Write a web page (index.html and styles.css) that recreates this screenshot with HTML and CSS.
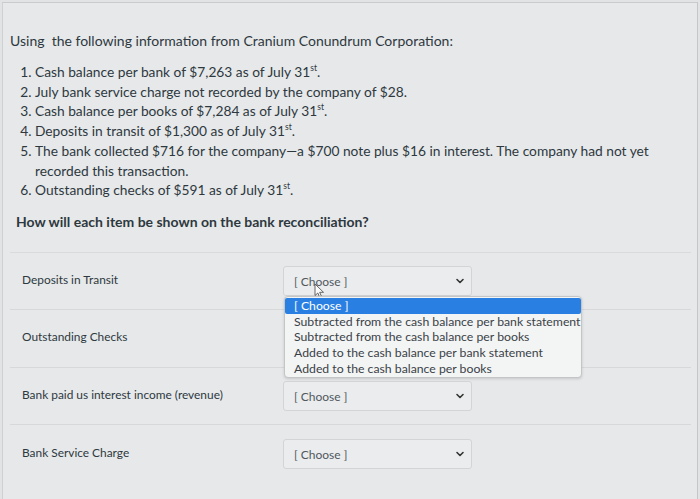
FILE: index.html
```html
<!DOCTYPE html>
<html>
<head>
<meta charset="utf-8">
<link rel="stylesheet" href="styles.css">
</head>
<body>
<div class="frame">
  <p class="intro">Using&nbsp; the following information from Cranium Conundrum Corporation:</p>
  <ol class="facts">
    <li>Cash balance per bank of $7,263 as of July 31<sup>st</sup>.</li>
    <li>July bank service charge not recorded by the company of $28.</li>
    <li>Cash balance per books of $7,284 as of July 31<sup>st</sup>.</li>
    <li>Deposits in transit of $1,300 as of July 31<sup>st</sup>.</li>
    <li>The bank collected $716 for the company—a $700 note plus $16 in interest. The company had not yet recorded this transaction.</li>
    <li>Outstanding checks of $591 as of July 31<sup>st</sup>.</li>
  </ol>
  <p class="question">How will each item be shown on the bank reconciliation?</p>
  <div class="matches">
    <div class="row">
      <div class="label">Deposits in Transit</div>
      <div class="sel-wrap">
        <div class="select"><span>[ Choose ]</span><svg class="chev" width="10" height="8" viewBox="0 0 10 8"><path d="M2 2.5 L5 5.5 L8 2.5" fill="none" stroke="#333" stroke-width="1.6" stroke-linecap="round" stroke-linejoin="round"/></svg></div>
        <svg class="cursor" width="12" height="16" viewBox="0 0 12 16"><path d="M1 1 L1 12.5 L3.8 10 L5.8 14.5 L7.6 13.7 L5.7 9.3 L9.5 9.3 Z" fill="#fafafa" stroke="#555" stroke-width="0.9" stroke-linejoin="round"/></svg>
        <ul class="dropdown">
          <li class="active">[ Choose ]</li>
          <li>Subtracted from the cash balance per bank statement</li>
          <li>Subtracted from the cash balance per books</li>
          <li>Added to the cash balance per bank statement</li>
          <li>Added to the cash balance per books</li>
        </ul>
      </div>
    </div>
    <div class="row">
      <div class="label">Outstanding Checks</div>
      <div class="sel-wrap"></div>
    </div>
    <div class="row">
      <div class="label">Bank paid us interest income (revenue)</div>
      <div class="sel-wrap">
        <div class="select"><span>[ Choose ]</span><svg class="chev" width="10" height="8" viewBox="0 0 10 8"><path d="M2 2.5 L5 5.5 L8 2.5" fill="none" stroke="#333" stroke-width="1.6" stroke-linecap="round" stroke-linejoin="round"/></svg></div>
      </div>
    </div>
    <div class="row last">
      <div class="label">Bank Service Charge</div>
      <div class="sel-wrap">
        <div class="select"><span>[ Choose ]</span><svg class="chev" width="10" height="8" viewBox="0 0 10 8"><path d="M2 2.5 L5 5.5 L8 2.5" fill="none" stroke="#333" stroke-width="1.6" stroke-linecap="round" stroke-linejoin="round"/></svg></div>
      </div>
    </div>
  </div>
</div>
</body>
</html>
```
FILE: styles.css
```css
html, body {
  margin: 0;
  padding: 0;
  background: #e1e3e5;
}
body {
  font-family: Lato, "Open Sans", sans-serif;
  color: #2e383f;
  width: 700px;
  height: 499px;
  overflow: hidden;
}
.frame {
  margin: 2px 2px 0 2px;
  height: 520px;
  border-top: 1px solid #c9cbcc;
  border-left: 1px solid #cfd1d2;
  border-right: 1px solid #c4c6c7;
  background: #e6e8e9;
  box-sizing: border-box;
  padding: 0 6px 0 7px;
}
.intro {
  margin: 0;
  padding-top: 28px;
  font-size: 14px;
  line-height: 20px;
}
.facts {
  margin: 11px 0 0 0;
  padding-left: 25px;
  width: 630px;
  font-size: 13.75px;
  line-height: 19.7px;
}
.facts sup {
  font-size: 8.5px;
  line-height: 0;
  vertical-align: 6px;
}
.question {
  margin: 12px 0 0 6px;
  font-size: 14px;
  font-weight: bold;
  line-height: 20px;
}
.matches {
  margin-top: 20px;
  border-top: 1px solid #d8dadb;
}
.row {
  display: flex;
  align-items: center;
  height: 57.5px;
  border-bottom: 1px solid #d6d8d9;
  box-sizing: border-box;
}
.row.last {
  border-bottom: none;
}
.label {
  width: 273px;
  padding-left: 12px;
  box-sizing: border-box;
  font-size: 11.9px;
  margin-top: -4px;
}
.sel-wrap {
  position: relative;
  width: 189px;
  height: 30px;
}
.select {
  display: flex;
  align-items: center;
  justify-content: space-between;
  height: 30px;
  box-sizing: border-box;
  border: 1px solid #d2d4d5;
  border-radius: 3px;
  background: #eaeced;
  padding: 0 6px 0 10px;
  font-size: 12px;
  color: #50585e;
}
.chev {
  display: block;
}
.cursor {
  position: absolute;
  left: 31px;
  top: 17px;
}
.dropdown {
  position: absolute;
  left: 1px;
  top: 30px;
  width: 298px;
  margin: 0;
  padding: 1px 0;
  list-style: none;
  box-sizing: border-box;
  background: #f3f4f4;
  border: 1px solid #c3c5c6;
  border-radius: 4px;
  box-shadow: 0 1px 3px rgba(0, 0, 0, 0.15);
  font-size: 12.25px;
  line-height: 15.6px;
  color: #3a4248;
}
.dropdown li {
  padding: 0 9px;
  white-space: nowrap;
}
.dropdown li.active {
  background: #2a80e2;
  color: #fff;
  border-radius: 2px;
}
```
